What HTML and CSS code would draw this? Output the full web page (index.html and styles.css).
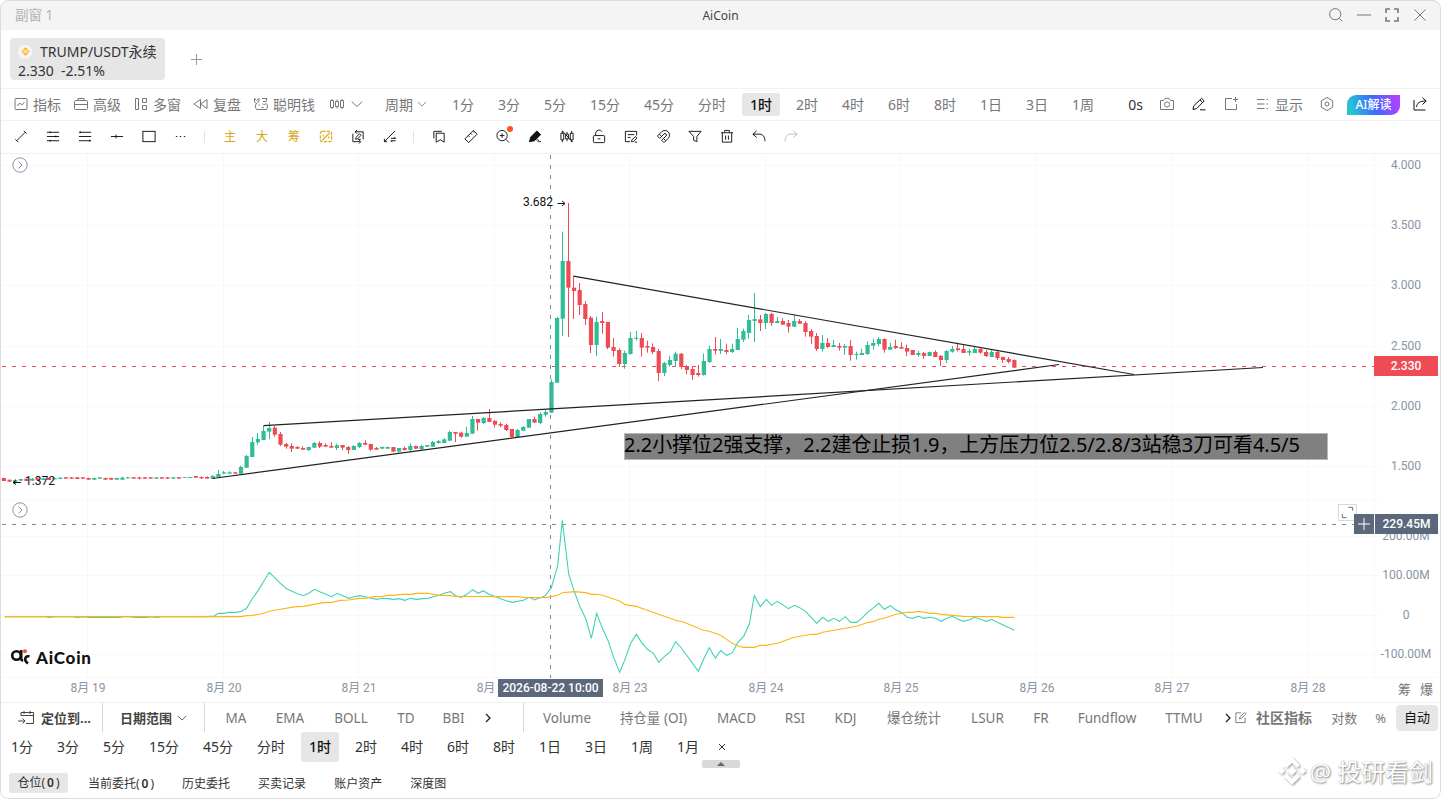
FILE: index.html
```html
<!DOCTYPE html>
<html lang="zh-CN">
<head>
  <meta charset="UTF-8">
  <title>AiCoin</title>
  <link rel="stylesheet" href="styles.css">
</head>
<body>
<div class="window">

  <header class="titlebar">
    <span class="sub-name">副窗 1</span>
    <span class="app-name">AiCoin</span>
    <div class="win-btns">
      <svg viewBox="0 0 16 16"><circle cx="7.2" cy="7.2" r="5.6"/><path d="M11.3 11.3l3 3"/></svg>
      <svg viewBox="0 0 16 16"><path d="M1 8h14"/></svg>
      <svg viewBox="0 0 16 16" class="thick"><path d="M2 6V2h4M10 2h4v4M14 10v4h-4M6 14H2v-4"/></svg>
      <svg viewBox="0 0 16 16"><path d="M2.500 2.500l11 11M13.500 2.500l-11 11"/></svg>
    </div>
  </header>

  <div class="tabs">
    <div class="tab">
      <div class="pair">
        <span class="coin"><svg viewBox="0 0 16 16"><path d="M4.600 6.600L8 3.200l3.400 3.400M4.600 9.400L8 12.800l3.400-3.400"/><path class="fill" d="M8 6.400L9.600 8 8 9.600 6.400 8zM3.200 6.400L4.800 8 3.200 9.600 1.600 8zM12.800 6.400L14.400 8l-1.600 1.600L11.200 8z"/></svg></span>
        TRUMP/USDT永续
      </div>
      <div class="price">2.330&nbsp; -2.51%</div>
    </div>
    <svg class="plus" viewBox="0 0 11 11"><path d="M5.500 0v11M0 5.500h11"/></svg>
  </div>

  <div class="toolbar">
    <div class="tool"><svg viewBox="0 0 16 16"><rect x="2" y="2.500" width="12" height="11" rx="1"/><path d="M4.500 10l2.300-3 2 2 2.700-3"/></svg>指标</div>
    <div class="tool"><svg viewBox="0 0 16 16"><rect x="1.500" y="4.500" width="13" height="9" rx="1"/><path d="M5 4.500v-2h6v2M1.500 8.500h13"/></svg>高级</div>
    <div class="tool"><svg viewBox="0 0 16 16"><path d="M2.500 2.500h3v11h-3zM9.500 2.500h4v4h-4zM9.500 9.500h4v4h-4z"/></svg>多窗</div>
    <div class="tool"><svg viewBox="0 0 16 16"><path d="M7.500 3.500v9L1 8zM14 3.500v9L7.500 8z"/></svg>复盘</div>
    <div class="tool smart"><svg viewBox="0 0 16 16"><path d="M1.500 2.500l2 2 2.500-2M1.500 2.500v3.500l2 1.500M6 2.500v3c-3.500 1.500-4.500 5-2.500 8h10c1.500-2.500 1-5-.5-6-1 1.200-2.500 1.200-3.500.3M9 2.500h5l-1 3M10 5.500h3M6 8.500v1.500M8.500 11.500h2"/></svg>聪明钱</div>
    <div class="tool kline"><svg viewBox="0 0 16 16"><path d="M1.500 4.500h3v7h-3zM6.500 5.500h3v5h-3zM11.500 4.500h3v7h-3zM3 3v1.500M3 11.500V13M8 3.500v2M8 10.500v2M13 3v1.500M13 11.500V13"/></svg><svg class="chev" viewBox="0 0 12 12"><path d="M.7 3.500L6 8.500l5.300-5"/></svg></div>
    <div class="tool cycle">周期<svg class="chev small" viewBox="0 0 12 12"><path d="M1 3.500L6 8.500l5-5"/></svg></div>
    <div class="periods">
      <span>1分</span><span>3分</span><span>5分</span><span class="w3">15分</span><span class="w3">45分</span><span class="wt">分时</span><span class="on"><b>1时</b></span><span>2时</span><span>4时</span><span>6时</span><span>8时</span><span>1日</span><span>3日</span><span>1周</span>
    </div>
    <div class="right-tools">
      <span class="dark">0s</span>
      <svg viewBox="0 0 16 16"><path d="M1.500 4.500h3L6 2.300h4l1.500 2.200h3v9h-13z"/><circle cx="8" cy="8.500" r="2.600"/></svg>
      <svg class="black" viewBox="0 0 16 16"><path d="M2 13.500l.7-3.500L10.500 2.300l2.700 2.600L5.500 12.700zM9 4l2.700 2.600M9 13.800h5.500"/></svg>
      <svg viewBox="0 0 16 16"><path d="M9 2.500H2.500v11h11V8M12.500 1v5M10 3.500h5"/></svg>
      <div class="show"><svg viewBox="0 0 16 16"><path d="M2 3.500h7.500M2 8h7.500M2 12.500h7.500M11.500 3.500h1.500M11.500 8h1.500M11.500 12.500h1.500"/></svg>显示</div>
      <svg viewBox="0 0 16 16"><path d="M8 1.500l5.700 3.300v6.400L8 14.500l-5.700-3.300V4.800z"/><circle cx="8" cy="8" r="2"/></svg>
      <span class="ai">AI解读</span>
      <svg class="black" viewBox="0 0 16 16"><path d="M2 4v10h11.500M4.500 11c.5-4 3-6 9.500-6M10.500 1.800L14.200 5l-3.700 3.500"/></svg>
    </div>
  </div>

  <div class="drawbar">
    <svg viewBox="0 0 16 16"><path d="M3.500 12.500l9-9M2 11l3 3M11 2l3 3"/></svg>
    <svg viewBox="0 0 16 16"><path d="M1.500 3.500h13M1.500 8h13M1.500 12.500h13M5 2.500v2M11 7v2M5 11.500v2"/></svg>
    <svg viewBox="0 0 16 16"><path d="M1.500 3.500h13M1.500 8h13M1.500 12.500h13M3 2.500v2M13 11.500v2"/></svg>
    <svg viewBox="0 0 16 16"><path d="M1.500 8h13M7 6v4"/></svg>
    <svg viewBox="0 0 16 16"><rect x="1.500" y="2.500" width="13" height="11"/></svg>
    <svg viewBox="0 0 16 16"><path d="M2.500 8h1.500M6.700 8h1.500M11 8h1.500"/></svg>
    <i></i>
    <em>主</em><em>大</em><em>筹</em>
    <svg class="gold" viewBox="0 0 16 16"><rect x="2" y="2.500" width="12" height="11" rx="2" stroke-dasharray="3.500 1.200"/><path d="M4 12l8-8M5 6v2M11 8v2"/></svg>
    <svg viewBox="0 0 16 16"><path d="M2.500 5v8.500H10M13.500 11V3H5M7 1L5 3l2 2M9 11.500l2 2-2 2M5.500 11l.4-2L9.500 5l1.700 1.700L7.500 10.500zM8 11h3"/></svg>
    <svg viewBox="0 0 16 16"><path d="M2 13.500L13.500 2M2 10.500v3h3M9 10h5l-1.500-1.500M14 12.500H9l1.500 1.500"/></svg>
    <i></i>
    <svg viewBox="0 0 16 16"><path d="M2.500 10V2.500H11M5 4.500h8.500v9.500l-4.200-2.500L5 14z"/></svg>
    <svg viewBox="0 0 16 16"><path d="M1.500 10.500l9-9 4 4-9 9zM7.500 4.500L9 6M5 7l1.500 1.500M10 2.500L11.500 4"/></svg>
    <div class="zoom-in"><svg viewBox="0 0 16 16"><circle cx="7" cy="7" r="5.500"/><path d="M11 11l3.500 3.500M4.500 7h5M7 4.500v5"/></svg><b></b></div>
    <svg viewBox="0 0 16 16"><path class="ink" d="M2 13.500L3.500 8.500l6.500-6.500 4 4-6.500 6.500z"/><path d="M9.500 12c2-1.500 3 0 1.500 2M12 13.500h2.500"/></svg>
    <svg viewBox="0 0 16 16"><path d="M1.500 4.500h3v7h-3zM6.500 5.500h3v5h-3zM11.500 4.500h3v7h-3zM3 2v2.500M3 11.500V14M8 3v2.500M8 10.500V13M13 2v2.500M13 11.500V14M3 2l11 12"/></svg>
    <svg viewBox="0 0 16 16"><rect x="2" y="7" width="12" height="7.500" rx="1"/><path d="M4.500 7V4.500a3.500 3.500 0 0 1 6.500-1.700M6.500 10.500h3"/></svg>
    <svg viewBox="0 0 16 16"><path d="M7 13.500H2v-11h12V7M4.500 6h7M4.500 9h3M8.500 13.500l.5-2 4-3.500 1.500 1.500-4 4zM12 14h2.500"/></svg>
    <svg viewBox="0 0 16 16"><path d="M2 7.500l4.500-4.500a4.800 4.800 0 0 1 7 7L9 14.500 6.500 12l4.700-4.500a1.500 1.500 0 0 0-2.200-2.200L4.500 10zM4 5.500L6.500 8M8.500 10l2.500 2.500"/></svg>
    <svg viewBox="0 0 16 16"><path d="M1.500 2.500h13L10 8v5.500L6.500 12V8z"/></svg>
    <svg viewBox="0 0 16 16"><path d="M1.500 4h13M3 4v10h10V4M5.500 4V1.500h5V4M6.500 7v4.500M9.500 7v4.500"/></svg>
    <svg viewBox="0 0 16 16"><path d="M5.500 2L1.500 5.500l4 3.500M1.500 5.500H9c3 0 5 2.500 5.500 7.500"/></svg>
    <svg class="off" viewBox="0 0 16 16"><path d="M10.500 2l4 3.500-4 3.500M14.500 5.500H7c-3 0-5 2.500-5.500 7.500"/></svg>
  </div>

  <main class="chart">
    <svg id="chart" viewBox="0 154 1441 548" width="1441" height="548">
      <g id="grid"></g>
      <g id="axis"></g>
      <path class="cursor" d="M550.500 155V678M2 524.500H1354"/>
      <path class="last-price" d="M2 366.500H1374"/>
      <g id="candles"></g>
      <path class="cursor" d="M550.500 382V412"/>
      <g class="trend">
        <path d="M263.500 425.700L1263 367.500"/>
        <path d="M212.500 478.500L1059 364.500"/>
        <path d="M573.500 276.200L1134 374.500"/>
      </g>
      <g class="marks">
        <text x="25" y="485" textLength="30">1.372</text>
        <path d="M13 482.500h8M16 480.500l-3 2 3 2"/>
        <text x="523" y="206" textLength="30">3.682</text>
        <path d="M557.500 203.500h7M562 201l3 2.500-3 2.500"/>
      </g>
      <!-- money flow -->
      <g transform="translate(0 500) scale(.34436 .33333)">
        <polyline class="flow" points="14,350 130,350 144,352 160,350 210,350 226,352 240,350 258,352 345,352 360,350 380,350 390,352 425,352 440,350 458,352 470,350 600,350 622,348 634,340 650,340 666,337 684,337 702,334 716,325 734,294 752,268 766,244 782,217 798,233 812,248 832,266 848,274 864,281 881,287 898,279 913,268 930,276 947,283 963,290 979,280 996,287 1012,295 1028,290 1044,287 1062,290 1078,295 1094,298 1110,295 1126,296 1143,298 1160,296 1175,301 1192,295 1210,298 1226,296 1242,295 1258,290 1275,286 1292,279 1308,275 1323,287 1340,292 1356,283 1372,269 1389,280 1403,272 1420,283 1436,289 1454,296 1470,302 1488,307 1520,301 1537,292 1552,300 1568,293"/>
        <polyline class="avg" points="14,350 700,350 716,347 734,346 752,343 766,340 782,334 814,328 860,320 881,319 940,308 963,307 990,301 1012,300 1044,295 1062,295 1084,290 1110,289 1126,286 1143,286 1165,283 1192,283 1210,280 1242,280 1275,286 1308,287 1323,289 1500,290 1520,292 1568,293"/>
      </g>
      <g transform="translate(540 500) scale(.33333)">
        <polyline class="flow" points="0,293 16,287 34,263 53,197 67,61 86,222 103,275 120,320 137,355 154,415 170,340 187,385 205,424 221,472 239,517 255,478 272,430 289,403 305,428 322,448 340,460 356,487 373,470 391,455 407,425 424,444 475,514 492,475 508,443 526,475 542,452 560,466 577,458 593,428 611,409 628,372 643,287 661,320 679,298 695,316 712,304 728,314 745,326 763,316 779,323 797,335 814,352 830,370 848,352 865,364 881,355 898,364 916,350 932,367 950,367 965,355 982,338 998,325 1016,310 1033,328 1051,317 1067,329 1086,338 1102,352 1118,355 1135,349 1153,355 1170,352 1187,355 1204,364 1220,355 1237,349 1254,358 1270,364 1288,359 1303,352 1322,358 1340,364 1355,358 1372,367 1423,391"/>
        <polyline class="avg" points="0,293 20,292 53,286 67,278 103,275 137,278 154,283 170,283 188,286 240,304 255,314 289,319 305,325 407,361 428,365 450,374 490,391 508,394 542,406 577,430 593,437 611,442 643,442 661,436 679,436 712,430 763,412 814,403 830,403 848,397 950,379 980,368 998,365 1016,358 1033,355 1067,343 1102,337 1118,337 1135,334 1170,340 1187,340 1204,343 1270,349 1372,350 1390,352 1423,352"/>
      </g>
      <g class="fold">
        <circle cx="20" cy="165" r="7.200"/><path d="M18.500 161.500l3.500 3.500-3.500 3.500"/>
        <circle cx="20" cy="510" r="7.200"/><path d="M18.500 506.500l3.500 3.500-3.500 3.500"/>
      </g>
      <g class="logo">
        <circle cx="16.500" cy="655.500" r="4.300"/><path d="M21.200 650v8.500c0 1.300.5 2 2 2"/>
        <path d="M29.500 656.500c-4-1.500-6.500 3.500-1.500 7"/>
        <circle class="dot" cx="25" cy="651.300" r="2"/>
        <text x="36" y="664" textLength="55">AiCoin</text>
      </g>
    </svg>
    <div class="note">2.2小撑位2强支撑，2.2建仓止损1.9，上方压力位2.5/2.8/3站稳3刀可看4.5/5</div>
    <div class="tag price-tag">2.330</div>
    <div class="tag flow-tag">229.45M</div>
    <div class="tag time-tag">2026-08-22 10:00</div>
    <svg class="expand" viewBox="0 0 18 16"><path d="M10 2.500h4.500V6M3.500 9.500V13.500H8"/></svg>
    <svg class="add" viewBox="0 0 20 20"><path d="M10 4v12M4 10h12"/></svg>
    <div class="axis-btns"><span>筹</span><span>爆</span></div>
  </main>

  <div class="indicators">
    <div class="locate"><svg viewBox="0 0 18 16"><path d="M4 6V2.500h12.500v11H9M4 5.500h12.500M7 1v3M13 1v3M1 11h7M5.500 8.500L8 11l-2.500 2.500"/></svg><b>定位到...</b></div>
    <div class="range"><b>日期范围</b><svg class="chev small" viewBox="0 0 12 12"><path d="M1 3.500L6 8.500l5-5"/></svg></div>
    <div class="main-ind">
      <span>MA</span><span>EMA</span><span>BOLL</span><span>TD</span><span>BBI</span>
      <svg class="chev next" viewBox="0 0 12 12"><path d="M4 2L8 6l-4 4"/></svg>
    </div>
    <div class="sub-ind">
      <span>Volume</span><span>持仓量 (OI)</span><span>MACD</span><span>RSI</span><span>KDJ</span><span>爆仓统计</span><span>LSUR</span><span>FR</span><span>Fundflow</span><span>TTMU</span>
    </div>
    <div class="more">
      <svg class="chev next" viewBox="0 0 12 12"><path d="M4 2L8 6l-4 4"/></svg>
      <svg class="edit" viewBox="0 0 14 14"><path d="M7.500 2H2v10.500h10V7M6 8.500l.3-2L11.500 1.500 13 3 8 8z"/></svg>
      <b>社区指标</b>
    </div>
    <div class="scale"><span>对数</span><span>%</span><span class="auto">自动</span></div>
  </div>

  <div class="period-row">
    <div class="periods">
      <span>1分</span><span>3分</span><span>5分</span><span class="w3">15分</span><span class="w3">45分</span><span class="wt">分时</span><span class="on"><b>1时</b></span><span>2时</span><span>4时</span><span>6时</span><span>8时</span><span>1日</span><span>3日</span><span>1周</span><span>1月</span>
    </div>
    <svg class="close" viewBox="0 0 10 10"><path d="M2 2l6 6M8 2L2 8"/></svg>
    <div class="handle"></div>
  </div>

  <footer class="orders">
    <span class="on">仓位(<b>0</b>)</span><span>当前委托(<b>0</b>)</span><span>历史委托</span><span>买卖记录</span><span>账户资产</span><span>深度图</span>
    <div class="watermark">
      <svg viewBox="0 0 28 28"><path d="M7.500 9.500L14 3l6.500 6.500M7.500 18.500L14 25l6.500-6.500"/><path class="fill" d="M14 9.500l4.500 4.500-4.500 4.500L9.500 14zM3.500 10.500L7 14l-3.500 3.500L0 14zM24.500 10.500L28 14l-3.500 3.500L21 14z"/></svg>
      @ 投研看剑
    </div>
  </footer>
</div>

<script>
  const NS = 'http://www.w3.org/2000/svg';

  function add(parent, tag, attrs, text) {
    const el = document.createElementNS(NS, tag);
    for (const k in attrs) el.setAttribute(k, attrs[k]);
    if (text) el.textContent = text;
    document.getElementById(parent).appendChild(el);
  }

  // grid and axis labels, the 22nd is cut short by the cursor time
  const days = [87.5, 223.5, 358.5, 494.5, 629.5, 765.5, 900.5, 1036.5, 1171.5, 1307.5, 1374.5];
  days.forEach((x, i) => {
    add('grid', 'path', { d: `M${x} 155V677` });
    if (i === 3) add('axis', 'text', { x: 486, y: 692 }, '8月');
    else if (i < 10) add('axis', 'text', { x: x + 0.5, y: 692 }, '8月 ' + (19 + i));
  });
  [165.5, 225.5, 285.5, 346.5, 406.5, 466.5, 500.5, 536.5, 575.5, 615.5, 654.5].forEach(y => {
    add('grid', 'path', { d: `M2 ${y}H1380` });
  });
  add('grid', 'path', { d: 'M2 677.5H1439' });
  [['4.000', 165], ['3.500', 225], ['3.000', 285], ['2.500', 346], ['2.000', 406], ['1.500', 466],
   ['200.00M', 536], ['100.00M', 575], ['0', 615], ['-100.00M', 654]].forEach(p => {
    add('axis', 'text', { x: 1406, y: p[1] + 4 }, p[0]);
  });

  // candles: color, high, top, bottom, low (thirds of a pixel below base)
  const blocks = [
    { start: 0, base: 400, rows: `r 233 234 243 243|r 239 239 245 245|g 237 240 245 245|g 237 237 242 242|r 236 236 243 243|g 234 236 242 242|r 234 235 240 240|g 233 235 240 240|r 234 235 240 240|g 233 234 238 238|g 232 233 237 237|r 231 232 236 236|r 231 232 236 236|r 231 232 237 237|r 231 232 236 236|r 233 234 239 239|g 233 234 239 239|g 231 232 236 236|r 233 234 239 239|r 233 234 239 239|g 233 234 239 239|g 230 233 239 239|g 231 232 235 235|r 231 232 236 236|r 231 232 236 238|r 231 232 236 236|r 231 232 236 236|g 231 232 236 236|r 231 232 236 236|r 231 232 236 236|g 231 232 236 236|r 231 232 236 236|g 231 232 234 234|g 231 231 234 234|r 228 228 233 234|r 229 231 235 237|r 229 231 236 236|g 225 228 236 237|g 210 222 231 231|g 213 217 221 221|g 214 217 221 221|r 216 217 221 221|g 197 201 221 222|g 165 168 203 204|g 111 126 171 171|g 99 117 127 134|g 78 93 120 120|g 66 84 95 117|r 78 83 104 110|r 96 102 134 138|r 129 132 140 146|r 130 138 146 156|r 138 141 146 147|r 139 144 149 149|g 140 141 150 153|g 126 129 143 144|r 124 129 140 144|r 130 135 140 140|r 127 138 143 143|g 131 136 144 150|r 135 135 143 150|r 138 141 150 161|g 136 138 150 150|g 126 129 141 144|r 121 129 134 135|r 131 132 149 152|r 141 144 149 149|g 140 141 146 146|g 140 141 146 146|r 141 141 155 155|g 144 144 155 158|r 140 144 150 152|g 130 138 150 154|r 137 138 146 146|g 135 138 147 150|g 135 135 140 140|g 123 126 140 140|g 120 123 129 131|g 115 118 129 129|g 92 96 122 123|r 96 96 101 126|r 95 98 110 113|g 80 99 110 110|g 48 57 101 101|r 57 57 68 92|g 51 54 69 72|r 27 54 66 66|r 60 63 74 83|r 66 72 77 82|r 71 75 90 93|r 87 87 111 112|g 87 90 111 111|g 78 81 92 92|g 57 57 83 83|r 50 57 68 68|g 37 42 69 72|g 30 36 44 50` },
    { start: 97, base: 180, rows: `g 598 606 698 698|g 411 414 608 608|g 155 243 416 468|r 69 243 323 471|r 288 323 333 417|r 309 330 375 405|r 363 372 417 435|r 408 413 495 519|g 410 426 495 528|r 396 423 429 461|r 426 426 503 507|r 474 501 513 530|r 506 510 552 561|g 512 519 552 566|g 456 474 522 524|g 453 473 476 482|r 459 474 503 530|r 482 498 503 518|r 490 501 516 522|r 507 513 579 603|g 546 549 579 588|g 527 540 555 560|g 515 521 543 560|r 519 521 561 567|r 555 558 570 583|r 561 567 585 600|r 555 579 585 590|g 521 543 585 587|g 497 507 546 549|r 471 507 512 524|g 477 507 513 522|r 491 510 516 523|g 491 507 516 519|g 444 477 510 510|g 446 453 479 486|g 405 420 459 476|g 339 417 423 486|r 405 418 429 453|g 399 402 429 447|r 399 402 429 438|g 411 423 429 429` },
    { start: 138, base: 280, rows: `r 115 123 134 134|r 120 129 140 158|g 105 123 140 140|r 117 123 131 131|r 123 129 156 170|r 148 153 170 192|r 159 168 207 213|g 165 189 207 215|r 174 189 201 204|g 180 195 201 201|r 189 198 203 212|g 192 198 203 225|r 180 198 225 242|g 215 222 225 239|g 206 219 225 225|g 184 195 222 225|g 177 189 197 209|g 171 177 192 198|r 175 177 209 218|g 188 201 209 209|r 179 198 204 207|r 187 201 206 206|r 194 204 215 228|r 210 210 225 225|g 212 219 225 230|r 216 219 228 237|g 215 216 228 228|r 211 216 231 231|r 225 228 240 258|g 210 213 240 249|g 198 207 215 218|r 188 205 210 214|r 195 207 219 219|g 206 213 218 227|g 198 207 219 219|r 205 207 218 221|r 210 216 228 231|g 207 216 231 231|r 210 216 234 240|r 230 231 240 249|r 231 237 246 250|r 239 240 263 264` }
  ];
  blocks.forEach(b => b.rows.split('|').forEach((row, n) => {
    const [color, ...v] = row.split(' ');
    const [high, top, bottom, low] = v.map(t => b.base + t / 3);
    const x = 3.8 + (b.start + n) * 5.645;
    add('candles', 'rect', { class: color, x: Math.round(x - 0.5), y: high, width: 1, height: low - high });
    add('candles', 'rect', { class: color, x: x - 2, y: top, width: 4.2, height: bottom - top });
  }));
</script>
</body>
</html>
```
FILE: styles.css
```css
* {
  box-sizing: border-box;
}

body {
  margin: 0;
  font: 14px "Noto Sans", "Noto Sans CJK SC", sans-serif;
  color: #777;
  background: #fff;
}

svg {
  fill: none;
  stroke: currentColor;
  flex: none;
}

.window {
  position: relative;
  width: 1441px;
  height: 799px;
  overflow: hidden;
  border-radius: 8px;
  display: flex;
  flex-direction: column;
  white-space: nowrap;
}

/* window frame */
.window::after {
  content: "";
  position: absolute;
  inset: 0;
  border: 1px solid #dcdcdc;
  border-radius: 8px;
  pointer-events: none;
}

/* title bar */
.titlebar {
  height: 30px;
  background: #f4f4f4;
  display: grid;
  grid-template-columns: 1fr auto 1fr;
  align-items: center;
  font-size: 13.5px;
}

.sub-name {
  padding: 0 0 2px 15px;
  color: #b3b3b3;
}

.app-name {
  color: #444;
  font-size: 12px;
}

.win-btns {
  display: flex;
  justify-content: flex-end;
  gap: 12px;
  padding-right: 13px;
}

.win-btns svg {
  width: 16px;
  height: 16px;
}

.win-btns .thick {
  stroke-width: 1.6;
}

/* tabs */
.tabs {
  height: 59px;
  display: flex;
  align-items: center;
  gap: 26px;
  padding-left: 10px;
  border-bottom: 1px solid #f0f0f0;
}

.tab {
  width: 155px;
  height: 42px;
  padding: 4px 7px 0 8px;
  background: #e6e6e6;
  border-radius: 4px;
  color: #333;
  line-height: 19px;
}

.pair {
  display: flex;
  align-items: center;
  gap: 8px;
}

.coin {
  width: 14px;
  height: 14px;
  border-radius: 7px;
  background: #f6f6f6;
  display: flex;
  align-items: center;
  justify-content: center;
}

.coin svg {
  width: 11px;
  color: #f9b21b;
  stroke-width: 2.2;
}

.fill {
  fill: currentColor;
  stroke: none;
}

.price {
  font-size: 14px;
}

.plus {
  width: 11px;
  height: 11px;
  color: #999;
}

/* main toolbar */
.toolbar {
  height: 32px;
  display: flex;
  align-items: center;
  padding: 0 0 1px 13px;
  border-bottom: 1px solid #f0f0f0;
}

.tool {
  width: 60px;
  display: flex;
  align-items: center;
  gap: 4px;
}

.tool svg,
.right-tools svg {
  width: 16px;
  height: 16px;
}

.smart {
  width: 76px;
}

.kline {
  width: 56px;
  gap: 6px;
}

.cycle {
  width: 55px;
}

.tool .chev {
  width: 12px;
  height: 12px;
}

.tool .small,
.small {
  width: 10px;
  height: 10px;
}

.periods {
  display: flex;
  align-items: center;
}

.periods span {
  width: 46px;
  text-align: center;
}

.periods .w3 {
  width: 54px;
}

.periods .wt {
  width: 52px;
}

.periods .on b {
  display: block;
  width: 38px;
  height: 23px;
  line-height: 23px;
  margin: 0 auto;
  border-radius: 3px;
  background: #e6e6e6;
  color: #111;
  font-weight: 500;
}

.toolbar .periods span {
  line-height: 23px;
}

.right-tools {
  margin-left: auto;
  padding-right: 13px;
  display: flex;
  align-items: center;
  gap: 16px;
}

.dark {
  color: #333;
}

.black {
  color: #111;
}

.show {
  display: flex;
  align-items: center;
  gap: 4px;
}

.ai {
  width: 53px;
  height: 20px;
  margin: 1px -4px 0 -4px;
  line-height: 20px;
  text-align: center;
  border-radius: 9px 0 9px 0;
  background: linear-gradient(75deg, #26c3d3 10%, #3a6cff 50%, #c13cff);
  color: #fff;
  font-size: 12px;
  font-weight: 500;
}

/* drawing tools */
.drawbar {
  height: 33px;
  display: flex;
  align-items: center;
  padding: 0 0 1px 5px;
  color: #111;
  border-bottom: 1px solid #f0f0f0;
}

.drawbar svg,
.drawbar em {
  width: 32px;
  height: 15px;
  flex: none;
}

.drawbar i {
  width: 1px;
  height: 12px;
  margin: 0 9px 0 7px;
  background: #e3e3e3;
}

.drawbar em {
  font-style: normal;
  font-size: 12px;
  line-height: 15px;
  text-align: center;
  color: #d9a514;
}

.drawbar .gold {
  color: #d9b11c;
  stroke-width: 1.3;
}

.drawbar .off {
  color: #bbb;
}

.ink {
  fill: currentColor;
}

.zoom-in {
  position: relative;
  display: flex;
}

.zoom-in b {
  position: absolute;
  left: 20px;
  top: -3px;
  width: 6px;
  height: 6px;
  border-radius: 3px;
  background: #fa541c;
}

/* chart */
.chart {
  position: relative;
  height: 549px;
  border-bottom: 1px solid #f0f0f0;
}

#chart {
  display: block;
}

#chart text {
  stroke: none;
}

#grid {
  color: #f8f8f8;
}

#axis text {
  font: 12px Roboto, "Noto Sans CJK SC", sans-serif;
  fill: #8a94a3;
  text-anchor: middle;
}

.cursor {
  stroke: #7d8799;
  stroke-dasharray: 4 6;
}

.last-price {
  stroke: #ef4b55;
  stroke-dasharray: 4 6;
}

#candles {
  stroke: none;
}

.r {
  fill: #ef4b55;
}

.g {
  fill: #2ebd95;
}

.trend {
  stroke: #222;
  stroke-width: 1.2;
}

.marks {
  stroke: #111;
}

.marks text {
  font: 12px Roboto, sans-serif;
  fill: #111;
}

.flow,
.avg {
  vector-effect: non-scaling-stroke;
}

.flow {
  stroke: #41d3b5;
  stroke-width: 1.1;
}

.avg {
  stroke: #fdb515;
  stroke-width: 1.1;
}

.fold {
  color: #8a94a3;
}

.logo {
  stroke: #111;
  stroke-width: 2.6;
}

.logo .dot {
  fill: #f5503c;
  stroke: none;
}

.logo text {
  font: 900 17px Lato, sans-serif;
  fill: #111;
}

.note {
  position: absolute;
  left: 624px;
  top: 279px;
  width: 704px;
  height: 27px;
  border: 1px solid #b8b8b8;
  background: #808080;
  color: #000;
  font-size: 19.97px;
  line-height: 21px;
  text-indent: -1px;
}

.tag {
  position: absolute;
  width: 63px;
  height: 20px;
  line-height: 20px;
  text-align: center;
  color: #fff;
  font-family: Roboto, sans-serif;
  font-size: 12px;
  font-weight: 500;
}

.price-tag {
  left: 1374px;
  top: 202px;
  width: 64px;
  background: #ef4b55;
}

.flow-tag {
  left: 1375px;
  top: 360px;
  background: #5b687c;
}

.time-tag {
  left: 498px;
  top: 525px;
  width: 105px;
  height: 18px;
  line-height: 18px;
  background: #5b687c;
}

.expand {
  position: absolute;
  left: 1338px;
  top: 350px;
  width: 19px;
  height: 17px;
  border: 1px solid #d4dae3;
  background: #fff;
  color: #5b687c;
}

.add {
  position: absolute;
  left: 1354px;
  top: 360px;
  width: 20px;
  height: 20px;
  background: #5b687c;
  color: #fff;
}

.axis-btns {
  position: absolute;
  right: 8px;
  top: 525px;
  display: flex;
  gap: 9px;
  font-size: 13px;
}

/* indicators */
.indicators {
  height: 29px;
  display: flex;
  align-items: center;
  padding-left: 17px;
}

.indicators b {
  font-size: 13px;
  line-height: 20px;
}

.locate,
.range {
  height: 29px;
  display: flex;
  align-items: center;
  color: #444;
  border-right: 1px solid #d8d8d8;
}

.locate {
  width: 86px;
  gap: 6px;
}

.locate svg {
  width: 18px;
  height: 16px;
}

.range {
  width: 102px;
  padding-left: 17px;
  gap: 5px;
}

.main-ind,
.sub-ind {
  height: 29px;
  display: grid;
  align-items: center;
  text-align: center;
  font-size: 13.5px;
  line-height: 20px;
}

.main-ind {
  grid-template-columns: 50px 58px 64px 46px 49px 20px;
  width: 319px;
  padding-left: 6px;
  border-right: 1px solid #d8d8d8;
}

.sub-ind {
  grid-template-columns: 76px 97px 69px 48px 53px 84px 63px 44px 88px 66px;
  padding-left: 5px;
}

.next {
  width: 12px;
  height: 12px;
  color: #222;
  stroke-width: 1.3;
  justify-self: center;
}

.more {
  display: flex;
  align-items: center;
  margin-left: 5px;
}

.edit {
  width: 13px;
  height: 13px;
  margin-right: 9px;
}

.more b {
  font-size: 14px;
}

.scale {
  display: flex;
  align-items: center;
  gap: 18px;
  margin-left: auto;
  padding-right: 3px;
  font-size: 13px;
}

.scale .auto {
  width: 42px;
  height: 26px;
  line-height: 25px;
  margin-left: -8px;
  text-align: center;
  color: #111;
  background: #e6e6e6;
  border-radius: 4px;
}

/* period row */
.period-row {
  position: relative;
  height: 36px;
  display: flex;
  align-items: flex-start;
  color: #333;
}

.period-row .periods {
  height: 30px;
  margin-left: -1px;
}

.period-row .periods span {
  line-height: 30px;
}

.period-row .on b {
  height: 30px;
  line-height: 30px;
}

.close {
  width: 10px;
  height: 10px;
  margin: 10px 0 0 6px;
}

.handle {
  position: absolute;
  left: 702px;
  bottom: 0;
  width: 38px;
  height: 8px;
  border-radius: 2px;
  background: #d9d9d9;
  display: flex;
  justify-content: center;
  align-items: center;
}

.handle::before {
  content: "";
  border: 4px solid transparent;
  border-top: 0;
  border-bottom-color: #666;
}

/* orders */
.orders {
  height: 30px;
  display: flex;
  align-items: center;
  padding: 0 8px 0 9px;
  font-size: 12px;
  line-height: 19px;
  color: #333;
}

.orders span {
  margin-right: 28px;
}

.orders .on {
  width: 59px;
  height: 20px;
  margin-right: 20px;
  text-align: center;
  background: #e6e6e6;
  border-radius: 3px;
}

.orders b {
  padding: 0 2px;
  font-weight: 600;
}

.watermark {
  display: flex;
  align-items: center;
  gap: 4px;
  margin: -24px 0 0 auto;
  font-size: 23.900px;
  color: #fff;
  text-shadow: 1px 1px 2px #888, 0 0 1px #999;
}

.watermark svg {
  width: 28px;
  height: 28px;
  stroke-width: 4;
  filter: drop-shadow(1px 1px 1px #999);
}
```
